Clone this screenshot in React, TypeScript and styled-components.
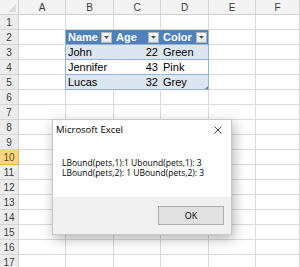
import React from 'react';
import styled, { createGlobalStyle } from 'styled-components';

const GlobalStyle = createGlobalStyle`
  body {
    margin: 0;
    background: #ffffff;
    font-family: "Liberation Sans", Arial, sans-serif;
  }
`;

const columns = ['A', 'B', 'C', 'D', 'E', 'F'];
const rowCount = 17;

type Kind = 'plain' | 'head' | 'band' | 'row';
type Cell = { text?: string; kind: Kind; align?: 'left' | 'right'; col: number; drop?: boolean };

const table: Record<number, [string, string, string]> = {
  2: ['Name', 'Age', 'Color'],
  3: ['John', '22', 'Green'],
  4: ['Jennifer', '43', 'Pink'],
  5: ['Lucas', '32', 'Grey'],
};

const buildRow = (row: number): Cell[] =>
  columns.map((_, i) => {
    const data = table[row];
    if (!data || i < 1 || i > 3) return { kind: 'plain', col: i };
    const kind: Kind = row === 2 ? 'head' : row % 2 === 1 ? 'band' : 'row';
    const isNumber = row > 2 && i === 2;
    return { text: data[i - 1], kind, col: i, align: isNumber ? 'right' : 'left', drop: row === 2 };
  });

export default function App() {
  return (
    <>
      <GlobalStyle />
      <Sheet>
        <Corner>
          <CornerMark />
        </Corner>
        {columns.map((c) => (
          <ColHeader key={c}>{c}</ColHeader>
        ))}
        {Array.from({ length: rowCount }, (_, r) => r + 1).map((row) => (
          <React.Fragment key={row}>
            <RowHeader $active={row === 10}>{row}</RowHeader>
            {buildRow(row).map((cell) => (
              <GridCell
                key={cell.col}
                $kind={cell.kind}
                $align={cell.align ?? 'left'}
                $first={cell.col === 1}
                $last={cell.col === 3}
              >
                {cell.text}
                {cell.drop && (
                  <DropButton>
                    <svg width="5" height="3" viewBox="0 0 5 3">
                      <path d="M0 0 H5 L2.5 3 Z" fill="#555" />
                    </svg>
                  </DropButton>
                )}
                {row === 5 && cell.col === 3 && <ResizeMark />}
              </GridCell>
            ))}
          </React.Fragment>
        ))}

        <Dialog>
          <TitleBar>
            <span>Microsoft Excel</span>
            <CloseIcon width="8" height="8" viewBox="0 0 8 8">
              <path d="M0.5 0.5 L7.5 7.5 M7.5 0.5 L0.5 7.5" stroke="#333" strokeWidth="0.9" />
            </CloseIcon>
          </TitleBar>
          <Message>
            <Line>LBound(pets,1):1 Ubound(pets,1): 3</Line>
            <Line>LBound(pets,2): 1 UBound(pets,2): 3</Line>
          </Message>
          <Footer>
            <OkButton>OK</OkButton>
          </Footer>
        </Dialog>
      </Sheet>
    </>
  );
}

const Sheet = styled.div`
  position: relative;
  display: grid;
  grid-template-columns: 19px 47px 48px 47px 48px 47px 1fr;
  grid-auto-rows: 15px;
  width: 300px;
  height: 267px;
  overflow: hidden;
  font-size: 11px;
  color: #000;
`;

const Corner = styled.div`
  position: relative;
  background: #f3f3f3;
  border-right: 1px solid #d0d0d0;
  border-bottom: 1px solid #d0d0d0;
`;

const CornerMark = styled.div`
  position: absolute;
  right: 2px;
  bottom: 2px;
  width: 0;
  height: 0;
  border-left: 8px solid transparent;
  border-bottom: 8px solid #dcdcdc;
`;

const ColHeader = styled.div`
  display: flex;
  align-items: center;
  justify-content: center;
  background: #f3f3f3;
  border-right: 1px solid #d5d5d5;
  border-bottom: 1px solid #d0d0d0;
  color: #3c3c3c;
  font-size: 10px;
`;

const RowHeader = styled.div<{ $active: boolean }>`
  display: flex;
  align-items: center;
  justify-content: center;
  background: ${(p) => (p.$active ? '#f8d57e' : '#ececec')};
  border-right: 1px solid ${(p) => (p.$active ? '#e2b54c' : '#d0d0d0')};
  border-bottom: 1px solid ${(p) => (p.$active ? '#e2b54c' : '#d5d5d5')};
  color: ${(p) => (p.$active ? '#5a4a1f' : '#3c3c3c')};
  font-size: 10px;
`;

const fills: Record<Kind, string> = {
  plain: '#ffffff',
  head: '#4f81bd',
  band: '#dce6f1',
  row: '#ffffff',
};

const GridCell = styled.div<{ $kind: Kind; $align: string; $first: boolean; $last: boolean }>`
  position: relative;
  display: flex;
  align-items: center;
  justify-content: ${(p) => (p.$align === 'right' ? 'flex-end' : 'flex-start')};
  padding: 0 2px;
  background: ${(p) => fills[p.$kind]};
  color: ${(p) => (p.$kind === 'head' ? '#ffffff' : '#000000')};
  font-weight: ${(p) => (p.$kind === 'head' ? 'bold' : 'normal')};
  white-space: nowrap;
  border-right: 1px solid
    ${(p) => (p.$kind === 'plain' ? '#dadada' : p.$last ? '#95b3d7' : fills[p.$kind])};
  border-bottom: 1px solid ${(p) => (p.$kind === 'plain' ? '#dadada' : '#95b3d7')};
  box-shadow: ${(p) => (p.$kind !== 'plain' && p.$first ? '-1px 0 0 #95b3d7' : 'none')};
`;

const DropButton = styled.div`
  position: absolute;
  right: 1px;
  top: 2px;
  width: 9px;
  height: 9px;
  display: flex;
  align-items: center;
  justify-content: center;
  background: linear-gradient(#fdfdfd, #e6e6e6);
  border: 1px solid #b5b5b5;
`;

const ResizeMark = styled.div`
  position: absolute;
  right: 0;
  bottom: 0;
  width: 0;
  height: 0;
  border-left: 3px solid transparent;
  border-bottom: 3px solid #4f81bd;
`;

const Dialog = styled.div`
  position: absolute;
  left: 52px;
  top: 119px;
  width: 180px;
  height: 116px;
  display: flex;
  flex-direction: column;
  background: #ffffff;
  border: 1px solid #c9c9c9;
  box-sizing: border-box;
  box-shadow: 2px 4px 12px rgba(0, 0, 0, 0.3);
  font-family: "Open Sans", "Noto Sans", sans-serif;
  font-size: 8.5px;
  color: #000;
`;

const TitleBar = styled.div`
  display: flex;
  align-items: center;
  justify-content: space-between;
  height: 19px;
  padding: 0 9px 0 3px;
  font-size: 9.5px;
`;

const CloseIcon = styled.svg`
  display: block;
`;

const Message = styled.div`
  flex: 1;
  padding: 19px 0 0 9px;
`;

const Line = styled.div`
  line-height: 10px;
  white-space: nowrap;
`;

const Footer = styled.div`
  height: 37px;
  display: flex;
  justify-content: flex-end;
  align-items: flex-start;
  padding: 9px 7px 0 0;
  box-sizing: border-box;
  background: #f0f0f0;
`;

const OkButton = styled.button`
  width: 66px;
  height: 19px;
  padding: 0;
  border: 1px solid #adadad;
  box-shadow: inset 0 0 0 1px #7a7a7a00;
  background: #e1e1e1;
  font-family: "Open Sans", "Noto Sans", sans-serif;
  font-size: 9px;
  color: #000;
`;
